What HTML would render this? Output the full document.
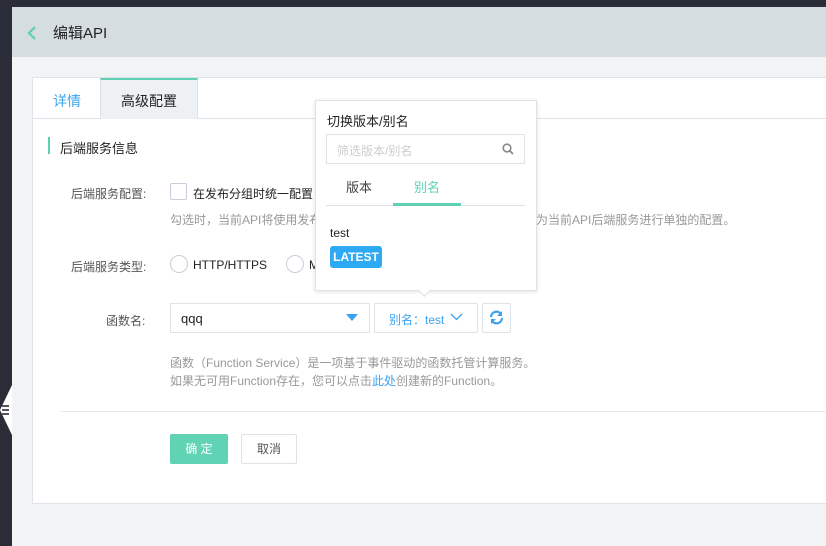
<!DOCTYPE html>
<html><head><meta charset="utf-8"><style>
*{box-sizing:border-box;margin:0;padding:0}
body{width:826px;height:546px;overflow:hidden;background:#2a2d37;font-family:"Liberation Sans","Noto Sans CJK SC",sans-serif;font-size:12px;color:#333;position:relative}
.a{position:absolute}
</style></head><body>
<div class="a" style="left:12px;top:7px;width:814px;height:539px;background:#f2f3f5"></div>
<div class="a" style="left:12px;top:7px;width:814px;height:50px;background:#d5dde0"></div>
<svg class="a" style="left:27px;top:26px" width="10" height="14"><path d="M8 1L2 7l6 6" stroke="#5fd0b3" stroke-width="2.2" fill="none"/></svg>
<div class="a" style="left:53px;top:22px;font-size:15px;color:#222">编辑API</div>
<svg class="a" style="left:0;top:385px" width="12" height="50"><path d="M12 0L0 25l12 25z" fill="#fff"/><rect x="2" y="20" width="7" height="2" fill="#555"/><rect x="2" y="24" width="7" height="2" fill="#555"/><rect x="2" y="28" width="7" height="2" fill="#555"/></svg>
<div class="a" style="left:32px;top:77px;width:800px;height:427px;background:#fff;border:1px solid #dde3e8"></div>
<div class="a" style="left:33px;top:118px;width:793px;height:1px;background:#dde3e8"></div>
<div class="a" style="left:53px;top:91px;font-size:14px;color:#3aa3f0">详情</div>
<div class="a" style="left:100px;top:78px;width:98px;height:41px;background:#edf1f4;border-left:1px solid #dde3e8;border-right:1px solid #dde3e8;border-top:2px solid #5fd0b3"></div>
<div class="a" style="left:121px;top:91px;font-size:14px;color:#222">高级配置</div>
<div class="a" style="left:48px;top:137px;width:2px;height:17px;background:#5fd0b3"></div>
<div class="a" style="left:60px;top:138px;font-size:13px;color:#222">后端服务信息</div>
<div class="a" style="left:71px;top:185px;color:#555">后端服务配置:</div>
<div class="a" style="left:170px;top:183px;width:17px;height:17px;border:1px solid #ccd;border-radius:2px"></div>
<div class="a" style="left:193px;top:185px;color:#222">在发布分组时统一配置</div>
<div class="a" style="left:170px;top:211px;color:#999">勾选时，当前API将使用发布</div>
<div class="a" style="left:536px;top:211px;color:#999">为当前API后端服务进行单独的配置。</div>
<div class="a" style="left:71px;top:258px;color:#555">后端服务类型:</div>
<div class="a" style="left:170px;top:255px;width:18px;height:18px;border:1px solid #ccd;border-radius:50%"></div>
<div class="a" style="left:193px;top:258px;color:#222">HTTP/HTTPS</div>
<div class="a" style="left:286px;top:255px;width:18px;height:18px;border:1px solid #ccd;border-radius:50%"></div>
<div class="a" style="left:309px;top:258px;color:#222">M</div>
<div class="a" style="left:106px;top:312px;color:#555">函数名:</div>
<div class="a" style="left:170px;top:303px;width:200px;height:30px;border:1px solid #dde3e8"></div>
<div class="a" style="left:181px;top:311px;font-size:13px;color:#222">qqq</div>
<svg class="a" style="left:346px;top:314px" width="12" height="8"><path d="M0 0h12L6 7z" fill="#3aa3f0"/></svg>
<div class="a" style="left:374px;top:303px;width:104px;height:30px;border:1px solid #dde3e8;border-radius:2px"></div>
<div class="a" style="left:389px;top:311px;color:#3aa3f0">别名：test</div>
<svg class="a" style="left:450px;top:313px" width="13" height="8"><path d="M1 1l5.5 5.5L12 1" stroke="#3aa3f0" stroke-width="1.3" fill="none"/></svg>
<div class="a" style="left:482px;top:303px;width:29px;height:30px;border:1px solid #dde3e8;border-radius:2px"></div>
<svg class="a" style="left:489px;top:310px" width="15" height="15"><path d="M2 7a5.5 5.5 0 0 1 10-3M13 8a5.5 5.5 0 0 1-10 3" stroke="#3aa3f0" stroke-width="2.2" fill="none"/><path d="M13 1v5h-5z M2 14v-5h5z" fill="#3aa3f0"/></svg>
<div class="a" style="left:170px;top:354px;color:#999;line-height:18px">函数（Function Service）是一项基于事件驱动的函数托管计算服务。<br>如果无可用Function存在，您可以点击<span style="color:#3aa3f0">此处</span>创建新的Function。</div>
<div class="a" style="left:60px;top:411px;width:766px;height:1px;background:#e6eaee"></div>
<div class="a" style="left:170px;top:434px;width:58px;height:30px;background:#5fd3b3;border-radius:2px;color:#fff;text-align:center;line-height:30px">确 定</div>
<div class="a" style="left:241px;top:434px;width:56px;height:30px;border:1px solid #dde3e8;border-radius:2px;color:#555;text-align:center;line-height:28px">取消</div>
<div class="a" style="left:315px;top:100px;width:222px;height:191px;background:#fff;border:1px solid #dde3e8;box-shadow:0 1px 4px rgba(0,0,0,.12)"></div>
<div class="a" style="left:420px;top:286px;width:9px;height:9px;background:#fff;transform:rotate(45deg);border-right:1px solid #dde3e8;border-bottom:1px solid #dde3e8"></div>
<div class="a" style="left:327px;top:111px;font-size:13px;color:#222">切换版本/别名</div>
<div class="a" style="left:326px;top:134px;width:199px;height:30px;border:1px solid #dde3e8"></div>
<div class="a" style="left:337px;top:142px;color:#ccc">筛选版本/别名</div>
<svg class="a" style="left:502px;top:143px" width="12" height="12"><circle cx="5" cy="5" r="3.8" stroke="#888" stroke-width="1.6" fill="none"/><path d="M8 8l3 3" stroke="#888" stroke-width="1.8"/></svg>
<div class="a" style="left:346px;top:177px;font-size:13px;color:#444">版本</div>
<div class="a" style="left:414px;top:177px;font-size:13px;color:#5fd0b3">别名</div>
<div class="a" style="left:326px;top:205px;width:199px;height:1px;background:#dde3e8"></div>
<div class="a" style="left:393px;top:203px;width:68px;height:3px;background:#5fd0b3"></div>
<div class="a" style="left:330px;top:226px;color:#222">test</div>
<div class="a" style="left:330px;top:246px;width:52px;height:22px;background:#2eaaf5;border-radius:3px;color:#fff;text-align:center;line-height:22px;font-weight:bold;font-size:12px">LATEST</div>
</body></html>
